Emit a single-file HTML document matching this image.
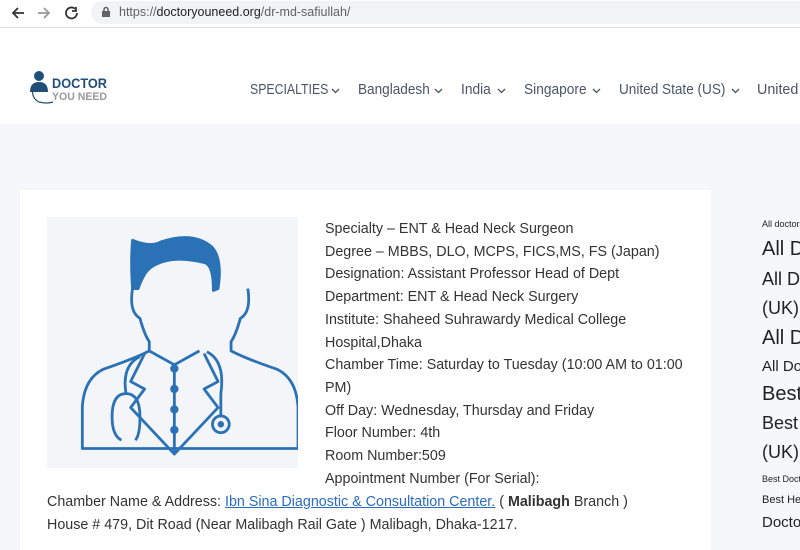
<!DOCTYPE html>
<html><head><meta charset="utf-8"><style>
*{margin:0;padding:0;box-sizing:border-box}
body{width:800px;height:533px;overflow:hidden;background:#f5f7fa;font-family:"Liberation Sans",sans-serif;position:relative;color:#333}
.bar{position:absolute;left:0;top:0;width:800px;height:28px;background:#fff;border-bottom:1px solid #dcdcdc}
.pill{position:absolute;left:91px;top:1px;width:720px;height:23px;background:#f1f3f4;border-radius:12px}
.url{position:absolute;left:119px;top:5px;font-size:12.5px;color:#5f6368}
.url b{font-weight:normal;color:#202124}
.hdr{position:absolute;left:0;top:28px;width:800px;height:96px;background:#fff}
.nav{position:absolute;top:82px;font-size:14.3px;color:#4a5568;white-space:nowrap;transform-origin:left center}
.chev{position:absolute;top:88px}
.card{position:absolute;left:20px;top:190px;width:691px;height:360px;background:#fff}
.img{position:absolute;left:47px;top:217px;width:251px;height:251px;background:#f3f5f8}
.txt{position:absolute;left:325px;top:218px;width:360px;font-size:14.3px;line-height:22.7px;color:#333}
.bot{position:absolute;left:47px;top:491px;font-size:14.3px;line-height:22.7px;color:#333;white-space:nowrap}
a{color:#2a6cc0;text-decoration:underline}
.side{position:absolute;left:762px;color:#222;white-space:nowrap}
</style></head><body>
<div class="bar">
<svg style="position:absolute;left:10px;top:5px" width="70" height="16" viewBox="0 0 70 16" fill="none" stroke-width="1.8">
<path d="M14 8H3M8 3L3 8l5 5" stroke="#333"/>
<path d="M28 8h11M34 3l5 5-5 5" stroke="#999"/>
<path d="M67 8a5.5 5.5 0 1 1-2-4.3" stroke="#333"/><path d="M66 2v4h-4" stroke="#333"/>
</svg>
<div class="pill"></div>
<svg style="position:absolute;left:101px;top:6px" width="10" height="12"><rect x="1" y="5" width="8" height="6" fill="#5f6368"/><path d="M3 5V3.5a2 2 0 0 1 4 0V5" stroke="#5f6368" fill="none" stroke-width="1.5"/></svg>
<div class="url">https://<b>doctoryouneed.org</b>/dr-md-safiullah/</div>
</div>
<div class="hdr"></div>
<svg style="position:absolute;left:27px;top:70px" width="84" height="38">
<circle cx="12" cy="6" r="5" fill="#1f4e79"/><path d="M3 22q0-10 9-10t9 10z" fill="#1f4e79"/>
<path d="M6 18q-2 10 6 14q8 2 14 0" stroke="#1f4e79" fill="none" stroke-width="1.2"/>
<text x="25" y="18" font-family="Liberation Sans" font-weight="bold" font-size="14" fill="#1f4e79" textLength="55" lengthAdjust="spacingAndGlyphs">DOCTOR</text>
<text x="25" y="30" font-family="Liberation Sans" font-weight="bold" font-size="11" fill="#999" textLength="55" lengthAdjust="spacingAndGlyphs">YOU NEED</text>
</svg>
<div class="nav" style="left:250px;transform:scaleX(.86)">SPECIALTIES</div>
<div class="nav" style="left:358px;transform:scaleX(.95)">Bangladesh</div>
<div class="nav" style="left:461px;transform:scaleX(.96)">India</div>
<div class="nav" style="left:524px;transform:scaleX(.96)">Singapore</div>
<div class="nav" style="left:619px;transform:scaleX(.95)">United State (US)</div>
<div class="nav" style="left:757px">United</div>
<svg class="chev" style="left:331px" width="9" height="6"><path d="M1 1l3.5 3.5L8 1" stroke="#4a5568" fill="none" stroke-width="1.3"/></svg>
<svg class="chev" style="left:434px" width="9" height="6"><path d="M1 1l3.5 3.5L8 1" stroke="#4a5568" fill="none" stroke-width="1.3"/></svg>
<svg class="chev" style="left:497px" width="9" height="6"><path d="M1 1l3.5 3.5L8 1" stroke="#4a5568" fill="none" stroke-width="1.3"/></svg>
<svg class="chev" style="left:592px" width="9" height="6"><path d="M1 1l3.5 3.5L8 1" stroke="#4a5568" fill="none" stroke-width="1.3"/></svg>
<svg class="chev" style="left:731px" width="9" height="6"><path d="M1 1l3.5 3.5L8 1" stroke="#4a5568" fill="none" stroke-width="1.3"/></svg>
<div class="card"></div>
<div class="img"><svg width="251" height="251" viewBox="0 0 270 260" fill="none" stroke="#2a72b5" stroke-width="3" stroke-linejoin="round">
<path d="M92 72q-2-30 0-52q20 8 30 2q35-12 55 5q12 12 7 45l-5 2q0-28-10-30q-20-5-35-3q-20 3-28 14q-5 8-8 17z" fill="#2a72b5"/>
<path d="M92 72q-4 25 8 32q5 18 10 25v10q-15 8-50 20q-20 10-22 40v45h232v-45q-2-30-22-40q-35-12-50-20v-10q5-7 10-25q12-7 8-32"/>
<path d="M110 139l27 15 27-15M137 154v95M105 142l-15 30 15 8-15 20 47 50 47-50-15-20 15-8-15-30"/>
<circle cx="137" cy="158" r="3" fill="#2a72b5"/><circle cx="137" cy="180" r="3" fill="#2a72b5"/><circle cx="137" cy="202" r="3" fill="#2a72b5"/><circle cx="137" cy="224" r="3" fill="#2a72b5"/>
<path d="M100 145q-20 10-15 40q-15 0-15 25q0 20 10 25M85 185q15 0 15 25q0 20-5 25"/>
<path d="M172 140q20 10 15 45v25"/><circle cx="187" cy="218" r="9"/><circle cx="187" cy="218" r="2" fill="#2a72b5"/>
</svg></div>
<div class="txt">Specialty – ENT &amp; Head Neck Surgeon<br>Degree – MBBS, DLO, MCPS, FICS,MS, FS (Japan)<br>Designation: Assistant Professor Head of Dept<br>Department: ENT &amp; Head Neck Surgery<br>Institute: Shaheed Suhrawardy Medical College Hospital,Dhaka<br>Chamber Time: Saturday to Tuesday (10:00 AM to 01:00 PM)<br>Off Day: Wednesday, Thursday and Friday<br>Floor Number: 4th<br>Room Number:509<br>Appointment Number (For Serial):</div>
<div class="bot">Chamber Name &amp; Address: <a>Ibn Sina Diagnostic &amp; Consultation Center.</a> ( <b>Malibagh</b> Branch )<br>House # 479, Dit Road (Near Malibagh Rail Gate ) Malibagh, Dhaka-1217.</div>
<div class="side" style="top:219px;font-size:9px">All doctors</div>
<div class="side" style="top:238px;font-size:20px">All D</div>
<div class="side" style="top:269px;font-size:18px">All D</div>
<div class="side" style="top:298px;font-size:18px">(UK)</div>
<div class="side" style="top:327px;font-size:20px">All D</div>
<div class="side" style="top:358px;font-size:15px">All Do</div>
<div class="side" style="top:383px;font-size:20px">Best</div>
<div class="side" style="top:413px;font-size:18px">Best</div>
<div class="side" style="top:442px;font-size:18px">(UK)</div>
<div class="side" style="top:474px;font-size:9px">Best Doct</div>
<div class="side" style="top:494px;font-size:11px">Best He</div>
<div class="side" style="top:514px;font-size:15px">Doctor</div>
</body></html>
